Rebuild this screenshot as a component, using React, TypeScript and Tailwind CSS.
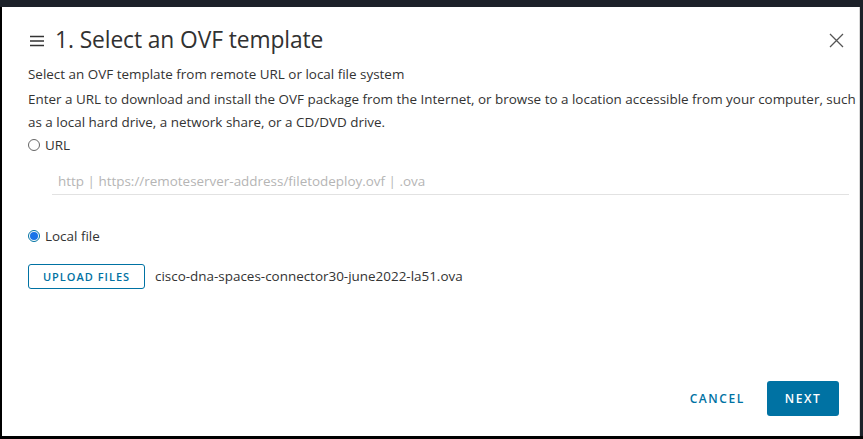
import React from 'react';

export default function App() {
  return (
    <div className="w-[863px] h-[439px] bg-black flex flex-col overflow-hidden" style={{ fontFamily: '"Open Sans", Lato, sans-serif' }}>
      {/* dark top strip from the page behind */}
      <div className="h-[7px] bg-[#1c2129] shrink-0" />
      <div className="flex flex-1 min-h-0">
        <div className="w-[2px] bg-black shrink-0" />
        <div className="w-[858px] h-[429px] bg-white border-r border-[#d8d8d8] flex flex-col">
          {/* Header */}
          <div className="flex items-center h-[57px] pt-[10px] pl-[28px] pr-[15px]">
            <svg width="14" height="12" viewBox="0 0 14 12" className="shrink-0">
              <path d="M0 1.5h14M0 6h14M0 10.5h14" stroke="#333" strokeWidth="1.3" />
            </svg>
            <h1 className="ml-[11px] text-[22.8px] text-[#313131] font-normal leading-none tracking-[-0.1px]">
              1. Select an OVF template
            </h1>
            <button className="ml-auto w-[16px] h-[16px] flex items-center justify-center">
              <svg width="15" height="15" viewBox="0 0 15 15">
                <path d="M1 1l13 13M14 1L1 14" stroke="#555" strokeWidth="1.3" />
              </svg>
            </button>
          </div>

          {/* Body */}
          <div className="pl-[26px] pr-0 text-[13.45px] text-[#333] leading-[23px]">
            <p className="mt-[-1px] whitespace-nowrap">Select an OVF template from remote URL or local file system</p>
            <p className="mt-[2px] leading-[23px] whitespace-nowrap">
              Enter a URL to download and install the OVF package from the Internet, or browse to a location accessible from your computer, such
              <br />
              as a local hard drive, a network share, or a CD/DVD drive.
            </p>

            <label className="flex items-center mt-[0px] h-[22px]">
              <span className="w-[12px] h-[12px] rounded-full border border-[#666] bg-white shrink-0" />
              <span className="ml-[5px]">URL</span>
            </label>

            <div className="ml-[24px] mr-[10px] mt-[12px] border-b border-[#e2e2e2] h-[27px] flex items-center">
              <span className="ml-[6px] text-[#b5b5b5]">http | https://remoteserver-address/filetodeploy.ovf | .ova</span>
            </div>

            <label className="flex items-center mt-[30px] h-[22px]">
              <span className="w-[12px] h-[12px] rounded-full border border-[#0072a3] bg-white shrink-0 flex items-center justify-center">
                <span className="w-[8px] h-[8px] rounded-full bg-[#1a73e8]" />
              </span>
              <span className="ml-[5px]">Local file</span>
            </label>

            <div className="flex items-center mt-[17px]">
              <button className="h-[25px] w-[117px] border border-[#0072a3] rounded-[3px] text-[11px] font-semibold tracking-[1px] text-[#0072a3]">
                UPLOAD FILES
              </button>
              <span className="ml-[10px]">cisco-dna-spaces-connector30-june2022-la51.ova</span>
            </div>
          </div>

          {/* Footer */}
          <div className="mt-auto flex items-center justify-end gap-[20px] pr-[20px] pb-[20px]">
            <button className="text-[12px] font-semibold tracking-[1.6px] text-[#0072a3] px-[2px]">CANCEL</button>
            <button className="h-[35px] w-[72px] rounded-[3px] bg-[#0072a3] text-white text-[12px] font-semibold tracking-[1.5px]">
              NEXT
            </button>
          </div>
        </div>
        <div className="flex-1 bg-[#1c2129]" />
      </div>
      <div className="h-[3px] bg-black shrink-0" />
    </div>
  );
}
